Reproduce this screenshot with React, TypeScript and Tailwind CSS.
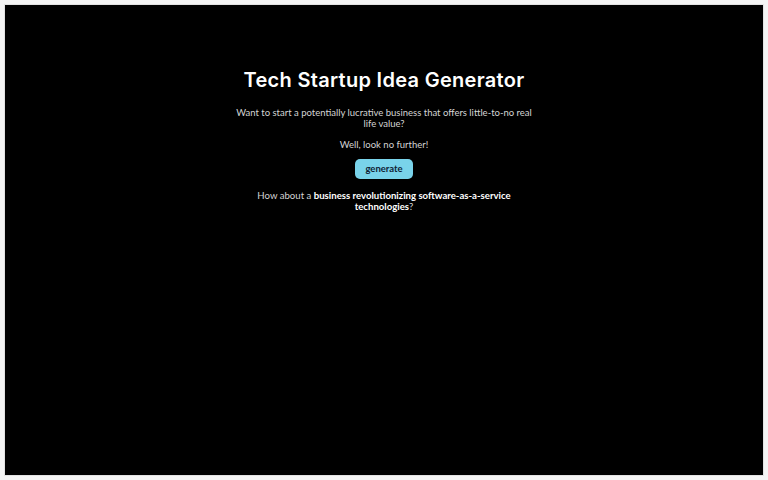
export default function App() {
  return (
    <div className="w-[768px] h-[480px] bg-[#f4f4f4] p-[4px]">
      <div className="w-full h-full border border-[#e2e2e2] bg-black flex flex-col items-center" style={{ fontFamily: "Lato, sans-serif" }}>
        <h1 className="mt-[61px] text-[20px] leading-[28px] font-semibold text-white tracking-[0.3px]" style={{ fontFamily: "Inter, 'Open Sans', sans-serif" }}>
          Tech Startup Idea Generator
        </h1>
        <p className="mt-[13px] w-[300px] text-center text-[9.5px] leading-[11px] text-[#d4d4d4]">
          Want to start a potentially lucrative business that offers little-to-no real life value?
        </p>
        <p className="mt-[10px] text-center text-[9.5px] leading-[11px] text-[#d4d4d4]">Well, look no further!</p>
        <button className="mt-[9px] h-[20px] px-[10px] rounded-[5px] bg-[#79d3ea] text-[#0f2336] text-[9.5px] font-bold leading-none">
          generate
        </button>
        <p className="mt-[11px] w-[270px] text-center text-[9.6px] leading-[11px] text-[#d4d4d4]">
          How about a <span className="font-bold text-white">business revolutionizing software-as-a-service technologies</span>?
        </p>
      </div>
    </div>
  );
}
